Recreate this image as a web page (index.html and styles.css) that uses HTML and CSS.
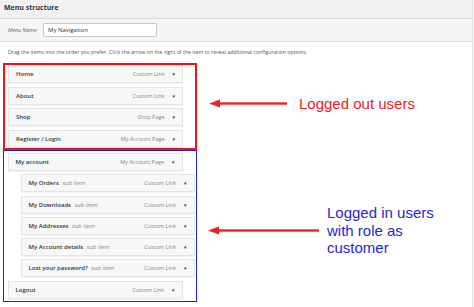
FILE: index.html
```html
<!DOCTYPE html>
<html lang="en">
<head>
  <meta charset="UTF-8">
  <meta name="viewport" content="width=device-width, initial-scale=1.0">
  <link rel="stylesheet" href="styles.css">
  <title>Menu structure</title>
</head>
<body>
<div class="panel">
  <div class="panelHead">Menu structure</div>
  <div class="nameRow">
    <span class="nameLabel">Menu Name</span>
    <span class="nameInput">My Navigation</span>
  </div>
  <div class="panelBody">
    <div class="tip">
      Drag the items into the order you prefer. Click the arrow on the right of the item to reveal additional configuration options.
    </div>

    <div class="groupRow">
      <div class="group redGroup">
        <div class="item"><span class="title">Home</span><span class="type">Custom Link</span><span class="caret">&#9660;</span></div>
        <div class="item"><span class="title">About</span><span class="type">Custom Link</span><span class="caret">&#9660;</span></div>
        <div class="item"><span class="title">Shop</span><span class="type">Shop Page</span><span class="caret">&#9660;</span></div>
        <div class="item"><span class="title">Register / Login</span><span class="type">My Account Page</span><span class="caret">&#9660;</span></div>
      </div>
      <div class="note redNote">
        <svg width="78" height="9" viewBox="0 0 78 9">
          <polygon points="0,4.5 11,0.5 11,8.5" fill="#e8232a"/>
          <rect x="9" y="3.3" width="69" height="2.4" fill="#e8232a"/>
        </svg>
        <span class="noteText">Logged out users</span>
      </div>
    </div>

    <div class="groupRow">
      <div class="group blueGroup">
        <div class="item"><span class="title">My account</span><span class="type">My Account Page</span><span class="caret">&#9660;</span></div>
        <div class="item sub"><span class="title">My Orders <i>sub item</i></span><span class="type">Custom Link</span><span class="caret">&#9660;</span></div>
        <div class="item sub"><span class="title">My Downloads <i>sub item</i></span><span class="type">Custom Link</span><span class="caret">&#9660;</span></div>
        <div class="item sub"><span class="title">My Addresses <i>sub item</i></span><span class="type">Custom Link</span><span class="caret">&#9660;</span></div>
        <div class="item sub"><span class="title">My Account details <i>sub item</i></span><span class="type">Custom Link</span><span class="caret">&#9660;</span></div>
        <div class="item sub"><span class="title">Lost your password? <i>sub item</i></span><span class="type">Custom Link</span><span class="caret">&#9660;</span></div>
        <div class="item"><span class="title">Logout</span><span class="type">Custom Link</span><span class="caret">&#9660;</span></div>
      </div>
      <div class="note blueNote">
        <svg width="111" height="9" viewBox="0 0 111 9">
          <polygon points="0,4.5 11,0.5 11,8.5" fill="#e8232a"/>
          <rect x="9" y="3.3" width="102" height="2.4" fill="#e8232a"/>
        </svg>
        <span class="noteText">Logged in users<br>with role as<br>customer</span>
      </div>
    </div>
  </div>
</div>
</body>
</html>
```

FILE: styles.css
```css
body {
  margin: 0;
  background: #fff;
  font-family: "Open Sans", "Noto Sans", sans-serif;
  color: #23282d;
}

.panel {
  width: 472px;
  border-right: 1px solid #e2e2e2;
}

.panelHead {
  height: 18px;
  line-height: 16px;
  padding-left: 4px;
  font-size: 7px;
  font-weight: bold;
  color: #333;
  background: #f1f1f1;
  border-bottom: 1px solid #dcdcdc;
}

.nameRow {
  height: 22px;
  display: flex;
  align-items: center;
  padding-left: 8px;
  background: #f5f5f5;
  border-bottom: 1px solid #dcdcdc;
}

.nameLabel {
  font-size: 5.3px;
  font-style: italic;
  color: #666;
  width: 35px;
}

.nameInput {
  width: 108px;
  height: 12px;
  line-height: 12px;
  padding-left: 4px;
  font-size: 6px;
  color: #333;
  background: #fff;
  border: 1px solid #c8c8c8;
  border-radius: 1px;
}

.panelBody {
  padding: 0 0 6px 3px;
}

.tip {
  height: 21px;
  line-height: 21px;
  padding-left: 5px;
  font-size: 5.25px;
  color: #555;
  white-space: nowrap;
}

.groupRow {
  display: flex;
  align-items: center;
}

.group {
  width: 194px;
  box-sizing: border-box;
  display: flex;
  flex-direction: column;
}

.redGroup {
  border: 2px solid #e8151b;
  padding: 0 0 0 3px;
  gap: 3.5px;
}

.blueGroup {
  border: 1.5px solid #1f1fcf;
  padding: 2.5px 0 2px 3.5px;
  gap: 3.3px;
}

.item {
  width: 175px;
  height: 18px;
  box-sizing: border-box;
  display: flex;
  align-items: center;
  padding: 0 6px 0 7px;
  background: #f7f7f7;
  border: 1px solid #e4e4e4;
  box-shadow: 0 1px 1px rgba(0, 0, 0, .04);
  font-size: 6px;
}

.item.sub {
  margin-left: 13px;
  width: 174px;
}

.title {
  font-weight: 600;
  flex: 1;
  white-space: nowrap;
  color: #32373c;
}

.title i {
  font-weight: normal;
  color: #888;
  margin-left: 2px;
}

.type {
  font-size: 5.5px;
  color: #888;
}

.caret {
  font-size: 4.5px;
  color: #444;
  margin-left: 7px;
}

.note {
  display: flex;
  align-items: center;
  font-family: "Liberation Sans", Arial, sans-serif;
  font-size: 15px;
}

.redNote {
  margin: 0 0 5px 12px;
  gap: 12px;
  color: #e8232a;
}

.blueNote {
  margin: 10px 0 0 11px;
  gap: 8px;
  color: #2626d4;
  line-height: 17.5px;
}
```
